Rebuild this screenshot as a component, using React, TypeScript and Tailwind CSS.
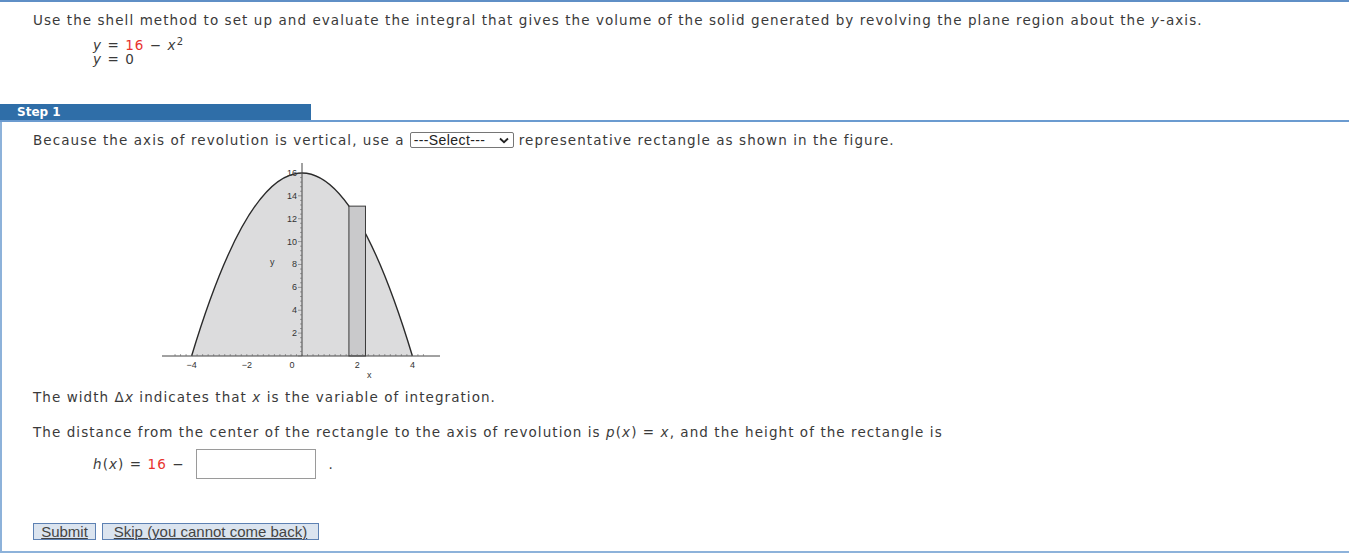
import React from 'react';

const X0 = 152; // svg x of origin
const Y0 = 197; // svg y of origin
const UX = 27.6;
const UY = 11.44;
const px = (x: number) => X0 + x * UX;
const py = (y: number) => Y0 - y * UY;

const ShellFigure: React.FC = () => {
  const curve = `M ${px(-4)} ${py(0)} Q ${px(0)} ${py(32)} ${px(4)} ${py(0)}`;
  const yMinor = Array.from({ length: 41 }, (_, i) => i * 0.4);
  const xMinor = Array.from({ length: 46 }, (_, i) => -4.6 + i * 0.2);
  return (
    <svg width="300" height="225" viewBox="0 0 300 225" className="block tracking-normal">
      {/* region */}
      <path d={`${curve} Z`} fill="#dcdcdd" />
      <path d={curve} fill="none" stroke="#2a2a2a" strokeWidth="1.4" />
      {/* representative rectangle */}
      <rect x={px(1.7)} y={py(13.1)} width={px(2.3) - px(1.7)} height={py(0) - py(13.1)} fill="#c9c9cb" stroke="#3a3a3a" strokeWidth="1" />
      {/* axes */}
      <line x1="12" y1={Y0} x2="290" y2={Y0} stroke="#444" strokeWidth="1" />
      <line x1={X0} y1="4" x2={X0} y2={Y0} stroke="#444" strokeWidth="1" />
      {yMinor.map((v) => (
        <line key={'y' + v} x1={X0 - (Math.abs(v % 2) < 0.01 || Math.abs((v % 2) - 2) < 0.01 ? 4 : 2)} y1={py(v)} x2={X0} y2={py(v)} stroke="#666" strokeWidth="0.6" />
      ))}
      {xMinor.map((v) => (
        <line key={'x' + v} x1={px(v)} y1={Y0} x2={px(v)} y2={Y0 - 2} stroke="#666" strokeWidth="0.6" />
      ))}
      <g fontFamily="'Liberation Sans', Arial, sans-serif" fontSize="9" fill="#333">
        {[2, 4, 6, 8, 10, 12, 14, 16].map((v) => (
          <text key={v} x={X0 - 5} y={py(v) + 3} textAnchor="end">{v}</text>
        ))}
        <text x="120" y="106">y</text>
        <text x={px(-4)} y="209" textAnchor="middle">−4</text>
        <text x={px(-2)} y="209" textAnchor="middle">−2</text>
        <text x={X0 - 10} y="209" textAnchor="middle">0</text>
        <text x={px(2)} y="209" textAnchor="middle">2</text>
        <text x={px(4)} y="209" textAnchor="middle">4</text>
        <text x="217" y="219">x</text>
      </g>
    </svg>
  );
};

export default function App() {
  return (
    <div className="w-[1349px] h-[553px] overflow-hidden bg-white text-[13.5px] leading-[14px] tracking-[1.07px] text-[#3a3a3a] font-['DejaVu_Sans',Verdana,sans-serif]">
      <div className="border-t-2 border-[#5f8fc6] pt-[11px] pl-[33px] h-[104px]">
        <p>
          Use the shell method to set up and evaluate the integral that gives the volume of the solid generated by revolving the plane region about the <i>y</i>-axis.
        </p>
        <div className="pl-[60px] pt-[11px]">
          <div>
            <i>y</i> = <span className="text-[#e8332f]">16</span> − <i>x</i>
            <sup className="text-[10px]">2</sup>
          </div>
          <div>
            <i>y</i> = 0
          </div>
        </div>
      </div>

      <div className="flex border-b-2 border-[#6b9bd0]">
        <div className="w-[311px] h-[16px] bg-[#2f6ea8] pl-[17px] text-white text-[12px] leading-[16px] font-bold tracking-normal">
          Step 1
        </div>
      </div>

      <div className="h-[431px] border-l-2 border-b-2 border-[#8db2da] pl-[31px] pt-[11px]">
        <div className="flex items-center gap-[5px] h-[14px]">
          <span>Because the axis of revolution is vertical, use a</span>
          <span className="flex items-center justify-between w-[104px] h-[16px] border border-[#767676] rounded-[2px] pl-[3px] pr-[4px] text-[14px] tracking-[0.4px] font-['Liberation_Sans',Arial,sans-serif] text-[#222]">
            ---Select---
            <svg width="10" height="7" viewBox="0 0 10 7">
              <path d="M1 1.5 L5 5.2 L9 1.5" fill="none" stroke="#222" strokeWidth="1.8" />
            </svg>
          </span>
          <span>representative rectangle as shown in the figure.</span>
        </div>

        <div className="pl-[117px] pt-[12px] h-[243px]">
          <ShellFigure />
        </div>

        <p>
          The width Δ<i>x</i> indicates that <i>x</i> is the variable of integration.
        </p>
        <p className="mt-[21px]">
          The distance from the center of the rectangle to the axis of revolution is <i>p</i>(<i>x</i>) = <i>x</i>, and the height of the rectangle is
        </p>
        <div className="flex items-center mt-[10px] pl-[60px] h-[30px]">
          <span>
            <i>h</i>(<i>x</i>) = <span className="text-[#e8332f]">16</span> −
          </span>
          <span className="ml-[11px] w-[120px] h-[30px] border border-[#9a9a9a]" />
          <span className="ml-[13px]">.</span>
        </div>

        <div className="flex gap-[6px] mt-[44px] font-['Liberation_Sans',Arial,sans-serif] text-[15px] leading-[15px] tracking-normal">
          <button className="w-[63px] h-[17px] bg-[#dbe4ef] border border-[#5d81b3] text-[#444] underline">Submit</button>
          <button className="w-[217px] h-[17px] bg-[#dbe4ef] border border-[#5d81b3] text-[#444] underline">Skip (you cannot come back)</button>
        </div>
      </div>
    </div>
  );
}
